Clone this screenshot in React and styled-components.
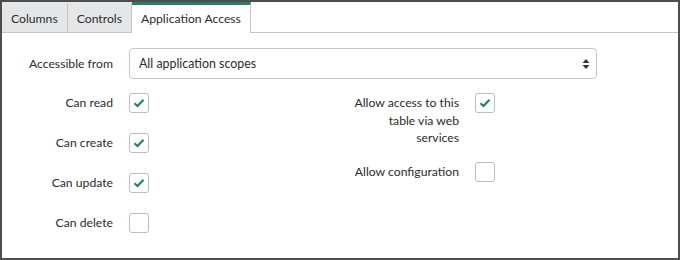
import React from "react";
import styled, { createGlobalStyle } from "styled-components";

const Global = createGlobalStyle`
  html, body { margin: 0; padding: 0; background: #fff; }
  body { font-family: "Lato", "Open Sans", sans-serif; color: #2b2b2b; }
  * { box-sizing: border-box; }
`;

const Frame = styled.div`
  width: 680px;
  height: 260px;
  border: 2px solid #4d4d4d;
  background: #fff;
  display: flex;
  flex-direction: column;
`;

const TabBar = styled.div`
  display: flex;
  height: 31px;
  border-bottom: 1px solid #c4c4c4;
  flex-shrink: 0;
`;

const Tab = styled.div`
  display: flex;
  align-items: center;
  padding: 0 9px;
  font-size: 12.2px;
  color: #2b2b2b;
  background: ${(p) => (p.$active ? "#fff" : "#e4e6e8")};
  border-right: 1px solid #c4c4c4;
  border-top: 3px solid ${(p) => (p.$active ? "#2a7d6c" : "#e4e6e8")};
  margin-bottom: ${(p) => (p.$active ? "-1px" : "0")};
  height: ${(p) => (p.$active ? "31px" : "30px")};
  padding-bottom: 1px;
`;

const Body = styled.div`
  padding-top: 15px;
  display: flex;
  flex-direction: column;
  gap: 14px;
`;

const Row = styled.div`
  display: grid;
  grid-template-columns: 111px ${(p) => p.$control || "auto"};
  column-gap: 16px;
  align-items: ${(p) => (p.$top ? "start" : "center")};
`;

const Label = styled.label`
  text-align: right;
  font-size: 12.2px;
  line-height: 17.5px;
  color: #2b2b2b;
  padding-top: ${(p) => (p.$top ? "1px" : "0")};
`;

const SelectBox = styled.div`
  height: 31px;
  border: 1px solid #c8c8c8;
  border-radius: 4px;
  display: flex;
  align-items: center;
  justify-content: space-between;
  padding: 0 6px 0 9px;
  font-size: 12.4px;
  color: #2b2b2b;
`;

const Columns = styled.div`
  display: grid;
  grid-template-columns: 346px 1fr;
`;

const Column = styled.div`
  display: flex;
  flex-direction: column;
  gap: ${(p) => p.$gap || "20px"};
`;

const Box = styled.span`
  width: 20px;
  height: 20px;
  border: 1px solid #bdbdbd;
  border-radius: 3px;
  background: #fff;
  display: flex;
  align-items: center;
  justify-content: center;
`;

function Check({ on }) {
  return (
    <Box>
      {on && (
        <svg width="12" height="10" viewBox="0 0 12 10">
          <path d="M1.5 5.2 L4.5 8 L10.5 1.8" fill="none" stroke="#1f7a68" strokeWidth="2" />
        </svg>
      )}
    </Box>
  );
}

function Arrows() {
  return (
    <svg width="8" height="12" viewBox="0 0 8 12">
      <path d="M4 1 L7.5 5 L0.5 5 Z M4 11 L7.5 7 L0.5 7 Z" fill="#333" />
    </svg>
  );
}

const left = [
  ["Can read", true],
  ["Can create", true],
  ["Can update", true],
  ["Can delete", false],
];

export default function App() {
  return (
    <>
      <Global />
      <Frame>
        <TabBar>
          <Tab>Columns</Tab>
          <Tab>Controls</Tab>
          <Tab $active>Application Access</Tab>
        </TabBar>
        <Body>
          <Row $control="468px">
            <Label>Accessible from</Label>
            <SelectBox>
              All application scopes
              <Arrows />
            </SelectBox>
          </Row>
          <Columns>
            <Column>
              {left.map(([label, on]) => (
                <Row key={label}>
                  <Label>{label}</Label>
                  <Check on={on} />
                </Row>
              ))}
            </Column>
            <Column $gap="15px">
              <Row $top>
                <Label $top>Allow access to this table via web services</Label>
                <Check on />
              </Row>
              <Row>
                <Label>Allow configuration</Label>
                <Check />
              </Row>
            </Column>
          </Columns>
        </Body>
      </Frame>
    </>
  );
}
